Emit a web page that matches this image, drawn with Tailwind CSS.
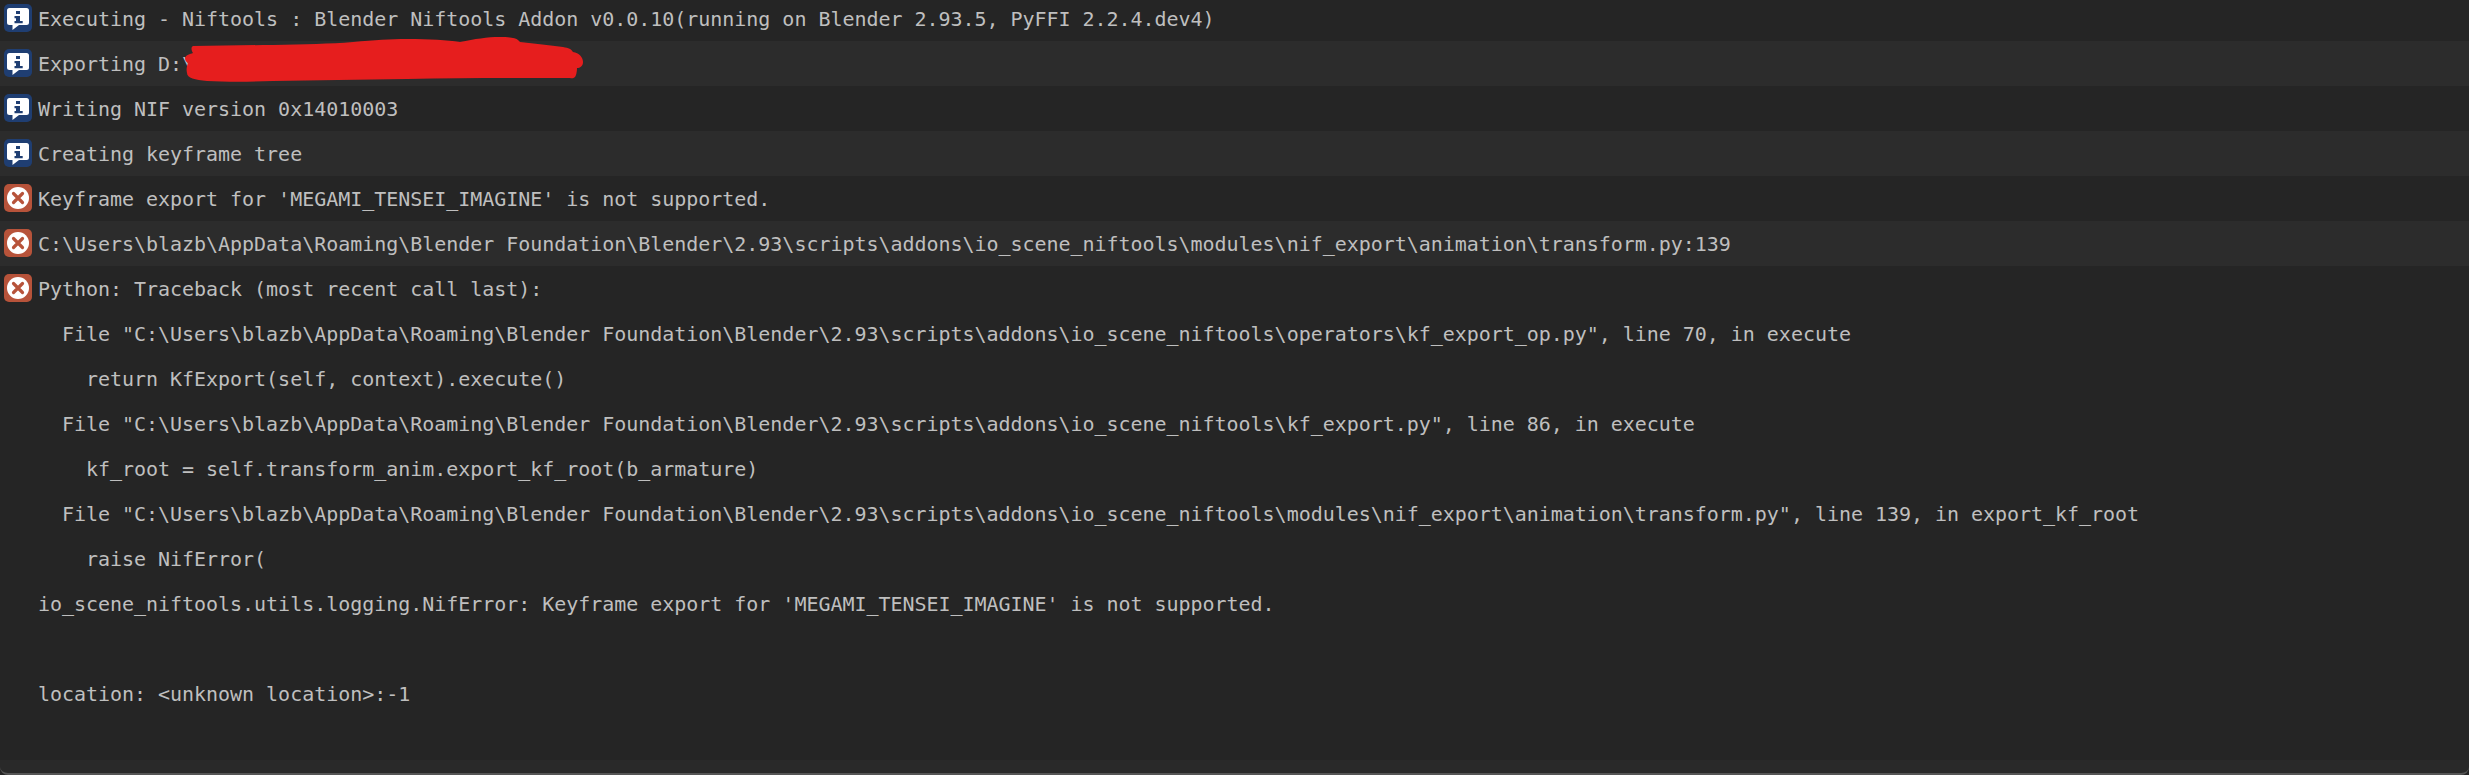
<!DOCTYPE html>
<html>
<head>
<meta charset="utf-8">
<script src="https://cdn.jsdelivr.net/npm/@tailwindcss/browser@4"></script>
</head>
<body class="m-0 overflow-hidden bg-[#252525]">
<main class="relative flex h-[775px] w-[2469px] flex-col overflow-hidden bg-[#252525] font-['DejaVu_Sans_Mono','Liberation_Mono',monospace] text-[20px] leading-[45px] tracking-[-0.035px] text-[#bfbfbf]">
  <div class="-mt-1 flex h-[45px] shrink-0 items-start whitespace-pre pl-1">
    <svg class="mr-[6px] mt-2 h-7 w-7 shrink-0" viewBox="0 0 28 28"><rect width="28" height="28" rx="5" fill="#1f3e72"/><path d="M5.500 4h17A2.500 2.500 0 0 1 25 6.500v12a2.500 2.500 0 0 1-2.500 2.500H15l-6.500 5v-5H5.500A2.500 2.500 0 0 1 3 18.500v-12A2.500 2.500 0 0 1 5.500 4z" fill="#fff"/><path d="M12 7h4v3h-4zM10.500 12H16v5h2.700v2.300h-8.200V17H12v-2.700h-1.500z" fill="#1f3e72"/></svg><span class="pt-px">Executing - Niftools : Blender Niftools Addon v0.0.10(running on Blender 2.93.5, PyFFI 2.2.4.dev4)</span>
  </div>
  <div class="flex h-[45px] shrink-0 items-start whitespace-pre bg-[#2c2c2c] pl-1">
    <svg class="mr-[6px] mt-2 h-7 w-7 shrink-0" viewBox="0 0 28 28"><rect width="28" height="28" rx="5" fill="#1f3e72"/><path d="M5.500 4h17A2.500 2.500 0 0 1 25 6.500v12a2.500 2.500 0 0 1-2.500 2.500H15l-6.500 5v-5H5.500A2.500 2.500 0 0 1 3 18.500v-12A2.500 2.500 0 0 1 5.500 4z" fill="#fff"/><path d="M12 7h4v3h-4zM10.500 12H16v5h2.700v2.300h-8.200V17H12v-2.700h-1.500z" fill="#1f3e72"/></svg><span class="pt-px">Exporting D:\</span>
  </div>
  <div class="flex h-[45px] shrink-0 items-start whitespace-pre pl-1">
    <svg class="mr-[6px] mt-2 h-7 w-7 shrink-0" viewBox="0 0 28 28"><rect width="28" height="28" rx="5" fill="#1f3e72"/><path d="M5.500 4h17A2.500 2.500 0 0 1 25 6.500v12a2.500 2.500 0 0 1-2.500 2.500H15l-6.500 5v-5H5.500A2.500 2.500 0 0 1 3 18.500v-12A2.500 2.500 0 0 1 5.500 4z" fill="#fff"/><path d="M12 7h4v3h-4zM10.500 12H16v5h2.700v2.300h-8.200V17H12v-2.700h-1.500z" fill="#1f3e72"/></svg><span class="pt-px">Writing NIF version 0x14010003</span>
  </div>
  <div class="flex h-[45px] shrink-0 items-start whitespace-pre bg-[#2c2c2c] pl-1">
    <svg class="mr-[6px] mt-2 h-7 w-7 shrink-0" viewBox="0 0 28 28"><rect width="28" height="28" rx="5" fill="#1f3e72"/><path d="M5.500 4h17A2.500 2.500 0 0 1 25 6.500v12a2.500 2.500 0 0 1-2.500 2.500H15l-6.500 5v-5H5.500A2.500 2.500 0 0 1 3 18.500v-12A2.500 2.500 0 0 1 5.500 4z" fill="#fff"/><path d="M12 7h4v3h-4zM10.500 12H16v5h2.700v2.300h-8.200V17H12v-2.700h-1.500z" fill="#1f3e72"/></svg><span class="pt-px">Creating keyframe tree</span>
  </div>
  <div class="flex h-[45px] shrink-0 items-start whitespace-pre pl-1">
    <svg class="mr-[6px] mt-2 h-7 w-7 shrink-0" viewBox="0 0 28 28"><rect width="28" height="28" rx="5" fill="#b7533a"/><circle cx="14" cy="14" r="11" fill="#fff"/><path d="M9.500 9.500l9 9M18.500 9.500l-9 9" stroke="#b7533a" stroke-width="3.200" stroke-linecap="round"/></svg><span class="pt-px">Keyframe export for 'MEGAMI_TENSEI_IMAGINE' is not supported.</span>
  </div>
  <div class="flex h-[45px] shrink-0 items-start whitespace-pre bg-[#2c2c2c] pl-1">
    <svg class="mr-[6px] mt-2 h-7 w-7 shrink-0" viewBox="0 0 28 28"><rect width="28" height="28" rx="5" fill="#b7533a"/><circle cx="14" cy="14" r="11" fill="#fff"/><path d="M9.500 9.500l9 9M18.500 9.500l-9 9" stroke="#b7533a" stroke-width="3.200" stroke-linecap="round"/></svg><span class="pt-px">C:\Users\blazb\AppData\Roaming\Blender Foundation\Blender\2.93\scripts\addons\io_scene_niftools\modules\nif_export\animation\transform.py:139</span>
  </div>
  <div class="flex h-[45px] shrink-0 items-start whitespace-pre pl-1">
    <svg class="mr-[6px] mt-2 h-7 w-7 shrink-0" viewBox="0 0 28 28"><rect width="28" height="28" rx="5" fill="#b7533a"/><circle cx="14" cy="14" r="11" fill="#fff"/><path d="M9.500 9.500l9 9M18.500 9.500l-9 9" stroke="#b7533a" stroke-width="3.200" stroke-linecap="round"/></svg><span class="pt-px">Python: Traceback (most recent call last):</span>
  </div>
  <div class="h-[45px] shrink-0 whitespace-pre pl-[38px] pt-px">  File "C:\Users\blazb\AppData\Roaming\Blender Foundation\Blender\2.93\scripts\addons\io_scene_niftools\operators\kf_export_op.py", line 70, in execute</div>
  <div class="h-[45px] shrink-0 whitespace-pre pl-[38px] pt-px">    return KfExport(self, context).execute()</div>
  <div class="h-[45px] shrink-0 whitespace-pre pl-[38px] pt-px">  File "C:\Users\blazb\AppData\Roaming\Blender Foundation\Blender\2.93\scripts\addons\io_scene_niftools\kf_export.py", line 86, in execute</div>
  <div class="h-[45px] shrink-0 whitespace-pre pl-[38px] pt-px">    kf_root = self.transform_anim.export_kf_root(b_armature)</div>
  <div class="h-[45px] shrink-0 whitespace-pre pl-[38px] pt-px">  File "C:\Users\blazb\AppData\Roaming\Blender Foundation\Blender\2.93\scripts\addons\io_scene_niftools\modules\nif_export\animation\transform.py", line 139, in export_kf_root</div>
  <div class="h-[45px] shrink-0 whitespace-pre pl-[38px] pt-px">    raise NifError(</div>
  <div class="h-[45px] shrink-0 whitespace-pre pl-[38px] pt-px">io_scene_niftools.utils.logging.NifError: Keyframe export for 'MEGAMI_TENSEI_IMAGINE' is not supported.</div>
  <div class="h-[45px] shrink-0"></div>
  <div class="h-[45px] shrink-0 whitespace-pre pl-[38px] pt-px">location: &lt;unknown location&gt;:-1</div>
  <div class="flex-1"></div>
  <div class="h-[15px] shrink-0 rounded-b-lg border-b-2 border-[#555555] bg-[#292929]"></div>
  <svg class="absolute left-[185px] top-[37px] h-[45px] w-[398px]" viewBox="0 0 398 45"><path d="M8 9C35 9 60 8 88 8C120 7 145 7 168 5C190 3 205 2 222 2C245 2 262 3 275 5C290 2 302 0 315 0C325 0 331 1 333 3L335 5C350 7 365 8 378 10C384 11 386 12 388 15C394 16 398 20 398 25C398 29 395 31 392 31C392 35 391 39 390 40C388 42 386 41 385 41C330 41 275 41 222 42C175 43 130 43 88 44C65 45 40 45 22 44C10 43 2 41 2 36C1 32 2 29 3 26C1 25 0 23 0 21C1 18 5 17 8 16C6 13 6 10 8 9Z" fill="#e61e1e"/></svg>
</main>
</body>
</html>
